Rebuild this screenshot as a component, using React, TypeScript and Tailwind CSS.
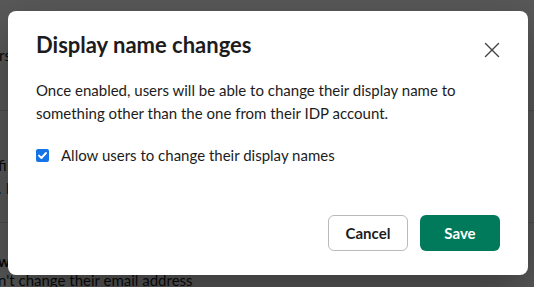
import React from "react";

export default function App() {
  return (
    <div
      className="relative w-[534px] h-[287px] overflow-hidden bg-white text-[#1d1c1d]"
      style={{ fontFamily: "Lato, 'Noto Sans', sans-serif" }}
    >
      {/* page behind the dialog */}
      <div className="flex flex-col">
        <div className="h-[110px] pt-[45px] text-[15px] leading-[20px] -ml-[1px]">
          <span>rs can set a name</span>
        </div>
        <div className="h-[112px] border-t border-[#dddddd] pt-[44px] -ml-[2px] text-[15px] leading-[20px]">
          <div>fi profile field settings</div>
          <div className="text-[#1264a3] pt-[3px]">. Learn more</div>
        </div>
        <div className="border-t border-[#dddddd] pt-[29px] -ml-[2px] text-[15px] leading-[19px]">
          <div className="font-bold">w email changes</div>
          <div>n't change their email address</div>
        </div>
      </div>

      {/* overlay */}
      <div className="absolute inset-0 bg-black/65" />

      {/* modal */}
      <div className="absolute left-[8px] top-[11px] w-[520px] h-[264px] bg-white rounded-[8px] shadow-[0_18px_48px_rgba(0,0,0,0.35)] flex flex-col">
        <div className="flex items-start justify-between pl-[28px] pr-[28px] pt-[21px]">
          <h1 className="text-[22px] leading-[26px] font-bold text-[#1d1c1d]">Display name changes</h1>
          <button className="mt-[4px] -mr-[6px] w-[28px] h-[28px] flex items-center justify-center text-[#454245]">
            <svg width="16" height="16" viewBox="0 0 16 16" fill="none">
              <path d="M1.5 1.5L14.5 14.5M14.5 1.5L1.5 14.5" stroke="currentColor" strokeWidth="1.4" strokeLinecap="round" />
            </svg>
          </button>
        </div>
        <div className="px-[28px] pt-[15px]">
          <p className="text-[15px] leading-[23px] text-[#1d1c1d]">
            Once enabled, users will be able to change their display name to something other than the one from their IDP account.
          </p>
          <label className="mt-[19px] flex items-center gap-[12px] text-[15px] leading-[22px]">
            <span className="w-[13px] h-[13px] rounded-[2px] bg-[#1473e6] flex items-center justify-center">
              <svg width="11" height="11" viewBox="0 0 11 11" fill="none">
                <path d="M2 5.6L4.4 8L9 3" stroke="white" strokeWidth="1.9" strokeLinecap="round" strokeLinejoin="round" />
              </svg>
            </span>
            <span>Allow users to change their display names</span>
          </label>
        </div>
        <div className="mt-auto flex justify-end gap-[12px] px-[28px] pb-[24px]">
          <button className="w-[80px] h-[36px] rounded-[6px] border border-[#bbbabb] bg-white text-[15px] font-bold text-[#1d1c1d]">
            Cancel
          </button>
          <button className="w-[80px] h-[36px] rounded-[6px] bg-[#007a5a] text-[15px] font-bold text-white">
            Save
          </button>
        </div>
      </div>
    </div>
  );
}
